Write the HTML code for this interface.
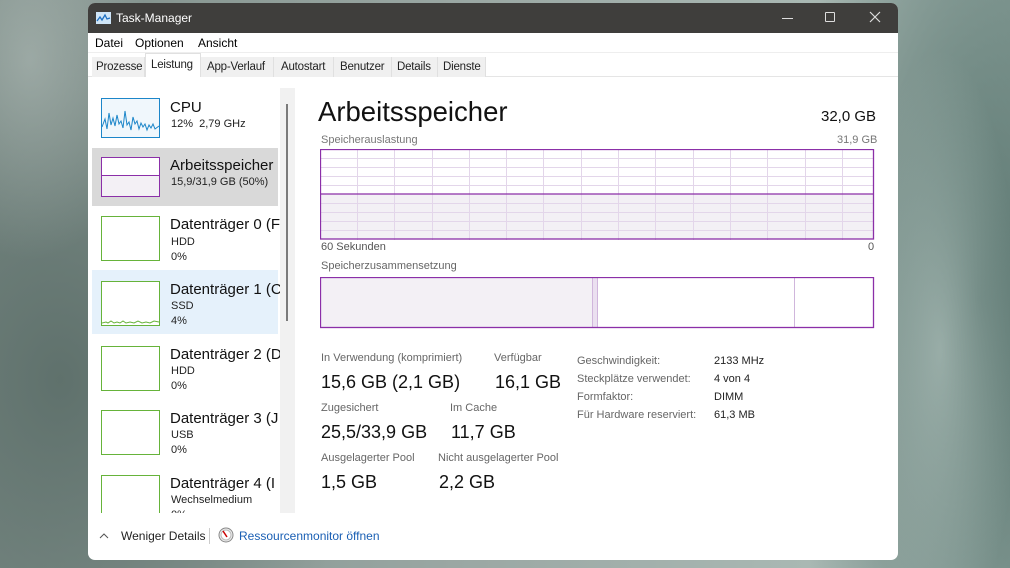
<!DOCTYPE html>
<html><head><meta charset="utf-8"><style>
*{margin:0;padding:0;box-sizing:border-box}
body{width:1010px;height:568px;overflow:hidden;position:relative;font-family:"Liberation Sans",sans-serif;color:#000;
background:radial-gradient(ellipse 300px 420px at 60px 380px,#5f716c 0%,rgba(95,113,108,0) 100%),
radial-gradient(ellipse 200px 500px at 980px 300px,#5b7670 0%,rgba(91,118,112,0) 100%),
linear-gradient(90deg,#7f8f8a 0%,#9aa7a3 45%,#a9b8b3 80%,#8ea49e 100%);}
.a{position:absolute;white-space:nowrap}
.win{position:absolute;left:88px;top:3px;width:810px;height:557px;background:#fff;border-radius:7px;overflow:hidden}
.title{position:absolute;left:0;top:0;width:810px;height:30px;background:#3f3e3c;color:#fff;font-size:12px}
.s{font-size:11px;color:#555}
.thumb{position:absolute;left:13px;width:59px;height:40px;border:1px solid #66b33a;background:#fff}
.t1{font-size:15px;color:#111}
.t2{font-size:11px;color:#222}
.lab{font-size:11px;color:#666}
.val{font-size:18px;color:#111}
</style></head><body>
<div class="a" style="left:0;top:0;width:1010px;height:568px;background:
radial-gradient(ellipse 80px 300px at 940px 350px,rgba(200,215,210,.5),rgba(0,0,0,0)),
radial-gradient(ellipse 120px 200px at 30px 60px,rgba(190,200,196,.5),rgba(0,0,0,0))"></div>
<div class="win">
 <div class="title">
  <svg class="a" style="left:8px;top:9px" width="15" height="12"><rect x="0" y="0" width="15" height="12" fill="#cfe5f7"/><polyline points="1,9 4,5 6,8 9,3 11,7 14,6" fill="none" stroke="#1d6fc2" stroke-width="1.3"/></svg>
  <div class="a" style="left:28px;top:8px">Task-Manager</div>
  <div class="a" style="left:694px;top:15px;width:11px;height:1px;background:#ddd"></div>
  <div class="a" style="left:737px;top:9px;width:10px;height:10px;border:1px solid #ddd;border-radius:1px"></div>
  <svg class="a" style="left:781px;top:8px" width="12" height="12"><path d="M1 1L11 11M11 1L1 11" stroke="#ddd" stroke-width="1.2"/></svg>
 </div>
 <div class="a" style="left:0;top:30px;width:810px;height:20px;border-bottom:1px solid #eee;font-size:12px">
  <span class="a" style="left:7px;top:3px">Datei</span><span class="a" style="left:47px;top:3px">Optionen</span><span class="a" style="left:110px;top:3px">Ansicht</span>
 </div>
 <div class="a" style="left:0;top:73px;width:810px;height:1px;background:#e5e5e5"></div>
 <div style="font-size:11.5px;color:#222;letter-spacing:-0.2px">
  <div class="a" style="left:4px;top:54px;width:53px;height:20px;background:#f0f0f0;border-right:1px solid #e0e0e0;padding:4px 0 0 4px">Prozesse</div>
  <div class="a" style="left:57px;top:50px;width:56px;height:24px;background:#fff;border:1px solid #e0e0e0;border-bottom:none;padding:5px 0 0 5px">Leistung</div>
  <div class="a" style="left:113px;top:54px;width:73px;height:20px;background:#f0f0f0;border-right:1px solid #e0e0e0;padding:4px 0 0 6px">App-Verlauf</div>
  <div class="a" style="left:186px;top:54px;width:60px;height:20px;background:#f0f0f0;border-right:1px solid #e0e0e0;padding:4px 0 0 7px">Autostart</div>
  <div class="a" style="left:246px;top:54px;width:58px;height:20px;background:#f0f0f0;border-right:1px solid #e0e0e0;padding:4px 0 0 6px">Benutzer</div>
  <div class="a" style="left:304px;top:54px;width:46px;height:20px;background:#f0f0f0;border-right:1px solid #e0e0e0;padding:4px 0 0 5px">Details</div>
  <div class="a" style="left:350px;top:54px;width:48px;height:20px;background:#f0f0f0;border-right:1px solid #e0e0e0;padding:4px 0 0 5px">Dienste</div>
 </div>
 <!-- sidebar -->
 <div class="a" style="left:4px;top:145px;width:186px;height:58px;background:#d9d9d9"></div>
 <div class="a" style="left:4px;top:267px;width:186px;height:64px;background:#e5f1fb"></div>
 <div class="a" style="left:192px;top:85px;width:15px;height:425px;background:#f1f1f1"></div>
 <div class="a" style="left:198px;top:101px;width:2px;height:217px;background:#7a7a7a"></div>
 <div class="a" style="left:0;top:85px;width:192px;height:425px;overflow:hidden">
  <div class="thumb" style="top:10px;border-color:#1c86c9;background:#f0f7fc"><svg width="57" height="38"><polyline points="0,28 3,20 5,30 7,14 9,26 11,19 13,27 15,16 17,25 19,22 21,29 23,12 25,26 27,23 29,31 31,18 33,25 35,22 37,30 39,24 41,28 43,25 45,31 47,26 49,29 51,25 53,30 57,27" fill="none" stroke="#1c86c9" stroke-width="1"/></svg></div>
  <div class="a t1" style="left:82px;top:11px">CPU</div><div class="a t2" style="left:83px;top:30px">12%&nbsp; 2,79 GHz</div>
  <div class="thumb" style="top:69px;border-color:#8b2fa8"><div style="height:18px;border-bottom:1px solid #8b2fa8"></div><div style="height:20px;background:#f3f0f5"></div></div>
  <div class="a t1" style="left:82px;top:69px">Arbeitsspeicher</div><div class="a t2" style="left:83px;top:88px">15,9/31,9 GB (50%)</div>
  <div class="thumb" style="top:128px;height:45px"></div>
  <div class="a t1" style="left:82px;top:128px">Datenträger 0 (F</div><div class="a t2" style="left:83px;top:148px">HDD</div><div class="a t2" style="left:83px;top:163px">0%</div>
  <div class="thumb" style="top:193px;height:45px"><svg width="57" height="43"><polyline points="0,41 4,40 6,41 9,39 12,41 15,40 18,41 21,39 24,41 28,40 32,41 36,39 40,41 44,40 48,41 52,39 57,40" fill="none" stroke="#66b33a"/></svg></div>
  <div class="a t1" style="left:82px;top:193px">Datenträger 1 (C</div><div class="a t2" style="left:83px;top:212px">SSD</div><div class="a t2" style="left:83px;top:227px">4%</div>
  <div class="thumb" style="top:258px;height:45px"></div>
  <div class="a t1" style="left:82px;top:258px">Datenträger 2 (D</div><div class="a t2" style="left:83px;top:277px">HDD</div><div class="a t2" style="left:83px;top:292px">0%</div>
  <div class="thumb" style="top:322px;height:45px"></div>
  <div class="a t1" style="left:82px;top:322px">Datenträger 3 (J</div><div class="a t2" style="left:83px;top:341px">USB</div><div class="a t2" style="left:83px;top:356px">0%</div>
  <div class="thumb" style="top:387px;height:45px"></div>
  <div class="a t1" style="left:82px;top:387px">Datenträger 4 (I</div><div class="a t2" style="left:83px;top:406px">Wechselmedium</div><div class="a t2" style="left:83px;top:421px">0%</div>
 </div>
 <!-- main -->
 <div class="a" style="left:230px;top:93px;font-size:27.5px;color:#111">Arbeitsspeicher</div>
 <div class="a" style="left:733px;top:105px;font-size:15px;color:#111">32,0 GB</div>
 <div class="a s" style="left:233px;top:131px;color:#777">Speicherauslastung</div>
 <div class="a s" style="left:749px;top:131px;color:#777">31,9 GB</div>
 <svg class="a" style="left:232px;top:146px" width="555" height="91">
  <rect x="0.5" y="45" width="553" height="45" fill="#f3f0f5"/>
  <g stroke="#e3d6ea" stroke-width="1">
   <path d="M0 9.5H554M0 18.5H554M0 27.5H554M0 36.5H554M0 54.5H554M0 63.5H554M0 72.5H554M0 81.5H554"/>
   <path d="M37.5 0V91M74.5 0V91M112.5 0V91M149.5 0V91M186.5 0V91M223.5 0V91M261.5 0V91M298.5 0V91M335.5 0V91M373.5 0V91M410.5 0V91M447.5 0V91M485.5 0V91M522.5 0V91"/>
  </g>
  <path d="M0 45H554" stroke="#8b2fa8" stroke-width="1.3"/>
  <rect x="0.5" y="0.5" width="553" height="89.5" fill="none" stroke="#8b2fa8" stroke-width="1.3"/>
 </svg>
 <div class="a s" style="left:233px;top:238px">60 Sekunden</div>
 <div class="a s" style="left:780px;top:238px">0</div>
 <div class="a s" style="left:233px;top:257px;color:#666">Speicherzusammensetzung</div>
 <svg class="a" style="left:232px;top:274px" width="555" height="52">
  <rect x="0.5" y="0.5" width="272" height="50" fill="#f3f0f5"/>
  <rect x="272" y="0.5" width="5" height="50" fill="#ebe0f0"/>
  <path d="M272.5 0V51M277.5 0V51M474.5 0V51" stroke="#d0b6dc"/>
  <rect x="0.5" y="0.5" width="553" height="50" fill="none" stroke="#8b2fa8" stroke-width="1.3"/>
 </svg>
 <div class="a lab" style="left:233px;top:349px">In Verwendung (komprimiert)</div>
 <div class="a val" style="left:233px;top:369px">15,6 GB (2,1 GB)</div>
 <div class="a lab" style="left:406px;top:349px">Verfügbar</div>
 <div class="a val" style="left:407px;top:369px">16,1 GB</div>
 <div class="a lab" style="left:233px;top:399px">Zugesichert</div>
 <div class="a val" style="left:233px;top:419px">25,5/33,9 GB</div>
 <div class="a lab" style="left:362px;top:399px">Im Cache</div>
 <div class="a val" style="left:363px;top:419px">11,7 GB</div>
 <div class="a lab" style="left:233px;top:449px">Ausgelagerter Pool</div>
 <div class="a val" style="left:233px;top:469px">1,5 GB</div>
 <div class="a lab" style="left:350px;top:449px">Nicht ausgelagerter Pool</div>
 <div class="a val" style="left:351px;top:469px">2,2 GB</div>
 <div class="a lab" style="left:489px;top:349px;line-height:18px">Geschwindigkeit:<br>Steckplätze verwendet:<br>Formfaktor:<br>Für Hardware reserviert:</div>
 <div class="a" style="left:626px;top:349px;line-height:18px;font-size:11px;color:#222">2133 MHz<br>4 von 4<br>DIMM<br>61,3 MB</div>
 <!-- bottom -->
 <svg class="a" style="left:11px;top:529px" width="10" height="7"><path d="M1 6L5 2L9 6" fill="none" stroke="#555"/></svg>
 <div class="a" style="left:33px;top:526px;font-size:12px;color:#222">Weniger Details</div>
 <div class="a" style="left:121px;top:525px;width:1px;height:16px;background:#ccc"></div>
 <svg class="a" style="left:130px;top:524px" width="16" height="16"><circle cx="8" cy="8" r="7" fill="#eee" stroke="#888"/><circle cx="8" cy="8" r="5" fill="#fff" stroke="#bbb"/><path d="M5 4L9 10" stroke="#c00" stroke-width="1.5"/></svg>
 <div class="a" style="left:151px;top:526px;font-size:12px;color:#1a5fb4">Ressourcenmonitor öffnen</div>
</div>
</body></html>
